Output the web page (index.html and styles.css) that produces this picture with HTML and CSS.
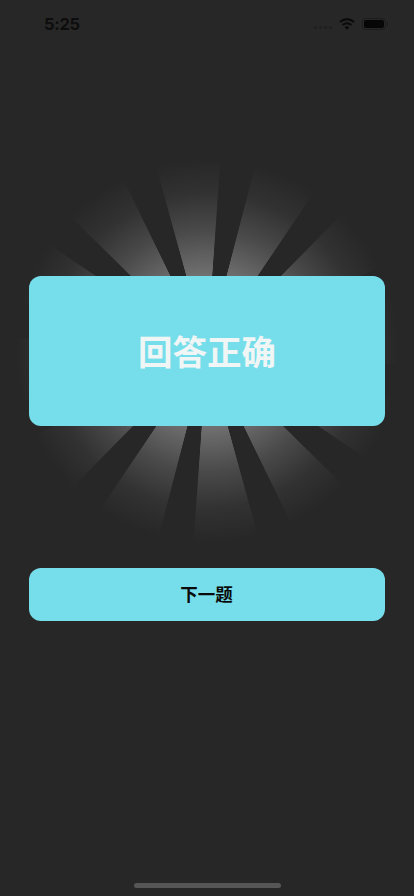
FILE: index.html
```html
<!DOCTYPE html>
<html lang="zh-CN">
<head>
    <meta charset="UTF-8">
    <title>回答正确</title>
    <link rel="stylesheet" href="styles.css">
</head>
<body>
    <div class="screen">
        <div class="status-bar">
            <span class="time">5:25</span>
            <div class="status-icons">
                <div class="signal">
                    <i></i><i></i><i></i><i></i>
                </div>
                <svg class="wifi" viewBox="0 0 16 12" width="16" height="12">
                    <path d="M8 11.8 5.7 9.3a3.3 3.3 0 0 1 4.6 0Z" fill="#0a0a0a"/>
                    <path d="M3.6 7.1a6.3 6.3 0 0 1 8.8 0" fill="none" stroke="#0a0a0a" stroke-width="2"/>
                    <path d="M1 4.1a10 10 0 0 1 14 0" fill="none" stroke="#0a0a0a" stroke-width="2"/>
                </svg>
                <div class="battery"><div class="battery-level"></div></div>
            </div>
        </div>

        <div class="content">
            <div class="result">
                <div class="rays"></div>
                <div class="card">回答正确</div>
            </div>
            <button class="next-btn">下一题</button>
        </div>

        <div class="home-indicator"></div>
    </div>
</body>
</html>
```

FILE: styles.css
```css
* {
    box-sizing: border-box;
}
body {
    margin: 0;
    background-color: #272727;
    font-family: "Noto Sans CJK SC", "Liberation Sans", sans-serif;
}
.screen {
    width: 414px;
    height: 896px;
    display: flex;
    flex-direction: column;
    overflow: hidden;
}
.status-bar {
    height: 48px;
    padding: 12px 28px 0 44px;
    display: flex;
    justify-content: space-between;
    align-items: flex-start;
}
.time {
    font-family: Inter, "Liberation Sans", sans-serif;
    font-size: 16.5px;
    font-weight: 700;
    letter-spacing: -0.3px;
    line-height: 24px;
    color: #0d0d0d;
}
.status-icons {
    display: flex;
    align-items: flex-start;
    gap: 7px;
    margin-top: 6px;
}
.signal {
    display: flex;
    gap: 2px;
    margin-top: 8px;
}
.signal i {
    width: 3px;
    height: 3px;
    border-radius: 50%;
    background-color: #1f1f1f;
}
.wifi {
    display: block;
}
.battery {
    position: relative;
    width: 24px;
    height: 12px;
    padding: 1px;
    border: 1px solid #1c1c1c;
    border-radius: 4px;
}
.battery::after {
    content: "";
    position: absolute;
    top: 3px;
    right: -3px;
    width: 1px;
    height: 4px;
    background-color: #1c1c1c;
}
.battery-level {
    height: 100%;
    border-radius: 2px;
    background-color: #060606;
}
.content {
    flex: 1;
    padding: 228px 29px 0;
}
.result {
    position: relative;
}
.rays {
    position: absolute;
    top: 50%;
    left: 50%;
    width: 384px;
    height: 384px;
    transform: translate(-50%, -50%);
    background:
        repeating-conic-gradient(from 4.2deg, #272727 0 10.2deg, transparent 10.6deg 29.6deg, #272727 30deg),
        radial-gradient(circle closest-side, rgba(255,255,255,0.62) 0, rgba(255,255,255,0.34) 39%, rgba(255,255,255,0.16) 63%, rgba(255,255,255,0.05) 82%, rgba(255,255,255,0) 100%);
}
.card {
    position: relative;
    height: 150px;
    padding-bottom: 2px;
    display: flex;
    align-items: center;
    justify-content: center;
    background-color: #76deea;
    border-radius: 12px;
    color: #f0f5f5;
    font-size: 34.5px;
    font-weight: 700;
}
.next-btn {
    display: block;
    width: 100%;
    height: 53px;
    margin-top: 142px;
    padding: 0 1px 2px 0;
    border: none;
    border-radius: 12px;
    background-color: #76deea;
    color: #0a0a0a;
    font-family: inherit;
    font-size: 17.5px;
    font-weight: 700;
}
.home-indicator {
    width: 147px;
    height: 5px;
    margin: 0 auto 8px;
    border-radius: 3px;
    background-color: #565656;
}
```
